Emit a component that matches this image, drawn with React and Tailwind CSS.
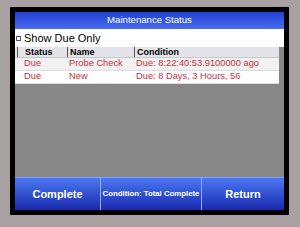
export default function App() {
  const rows = [
    { status: 'Due', name: 'Probe Check', condition: 'Due: 8:22:40:53.9100000 ago', bg: 'bg-[#f1f1f1]' },
    { status: 'Due', name: 'New', condition: 'Due: 8 Days, 3 Hours, 56', bg: 'bg-white' },
  ]

  return (
    <div
      className="w-[300px] h-[227px] bg-[#a9a1a1] pt-[7px] pl-[10px] pr-[11px] pb-[12px]"
      style={{ fontFamily: '"Liberation Sans", Arial, sans-serif' }}
    >
      <div className="h-full bg-black p-[5px]">
        <div className="h-full flex flex-col bg-[#878787]">
          <div className="h-[17px] shrink-0 flex items-center justify-center bg-linear-to-b from-[#2240d4] to-[#4a6cf0] text-white text-[9.6px]">
            Maintenance Status
          </div>

          <div className="h-[18px] shrink-0 flex items-center bg-white text-black text-[11px]">
            <span className="ml-[1px] w-[5px] h-[5px] border border-[#555] mr-[3px]" />
            Show Due Only
          </div>

          <div className="mr-[5px]">
            <div className="h-[11px] flex items-center bg-[#e3e3e9] text-black font-bold text-[9px] leading-none border-b border-[#c8c8c8]">
              <div className="w-[50px] h-full flex items-center pl-[7px] border-l border-[#555] ml-[2px]">Status</div>
              <div className="w-[67px] h-full flex items-center pl-[2px] border-l border-[#555]">Name</div>
              <div className="flex-1 h-full flex items-center pl-[2px] border-l border-[#555]">Condition</div>
            </div>
            {rows.map((r, i) => (
              <div
                key={i}
                className={`h-[13px] flex items-center text-[#c8303a] text-[9.3px] leading-none border-b border-[#dcdcdc] ${r.bg}`}
              >
                <div className="w-[52px] pl-[9px]">{r.status}</div>
                <div className="w-[67px] pl-[2px]">{r.name}</div>
                <div className="flex-1 pl-[2px] whitespace-nowrap overflow-hidden">{r.condition}</div>
              </div>
            ))}
          </div>

          <div className="flex-1" />

          <div className="h-[33px] shrink-0 flex text-white font-bold">
            <button className="w-[85px] h-full flex items-center justify-center bg-linear-to-b from-[#4d76f4] to-[#1a28ac] border-t border-[#7fa0ff] text-[11px]">
              Complete
            </button>
            <div className="w-px bg-[#8fb0ff]" />
            <button className="w-[100px] h-full flex items-center justify-center bg-linear-to-b from-[#4d76f4] to-[#1a28ac] border-t border-[#7fa0ff] text-[7.8px] whitespace-nowrap">
              Condition: Total Complete
            </button>
            <div className="w-px bg-[#8fb0ff]" />
            <button className="flex-1 h-full flex items-center justify-center bg-linear-to-b from-[#4d76f4] to-[#1a28ac] border-t border-[#7fa0ff] text-[11px]">
              Return
            </button>
          </div>
        </div>
      </div>
    </div>
  )
}
